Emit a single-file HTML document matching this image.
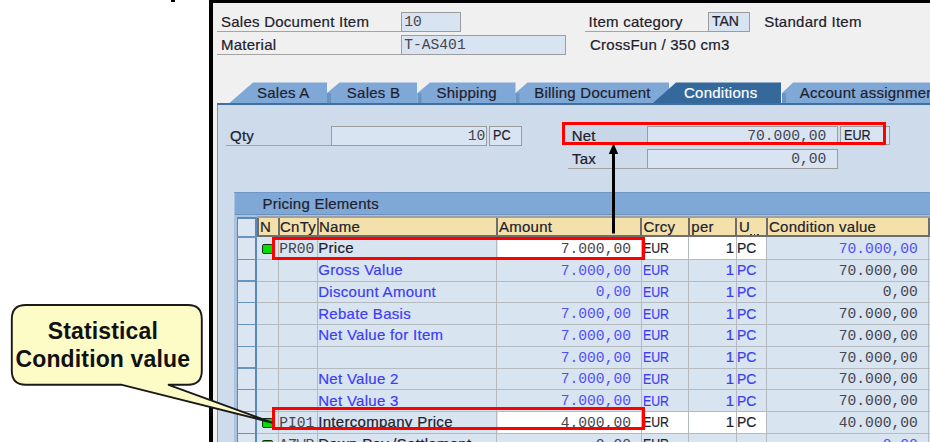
<!DOCTYPE html>
<html><head><meta charset="utf-8"><style>
html,body{margin:0;padding:0;}
body{width:930px;height:442px;overflow:hidden;position:relative;background:#fff;}
body>div{position:absolute;}
.s{font-family:"Liberation Sans",sans-serif;line-height:1;white-space:nowrap;-webkit-text-stroke:0.2px currentColor;}
.m{font-family:"Liberation Mono",monospace;line-height:1;white-space:nowrap;}
.b{font-family:"Liberation Sans",sans-serif;font-weight:bold;font-size:23px;line-height:27.5px;text-align:center;color:#111;}
</style></head><body>
<div style="left:213px;top:3px;width:717.00px;height:439.00px;background:#f0f0f0;"></div>
<div style="left:209px;top:0px;width:4.00px;height:442.00px;background:#000;"></div>
<div style="left:209px;top:0px;width:721.00px;height:3.00px;background:#000;"></div>
<div style="left:171px;top:0px;width:4.00px;height:2.00px;background:#000;"></div>
<div class="s" style="left:221px;top:14.10px;font-size:15px;letter-spacing:0.25px;color:#20202c;">Sales Document Item</div>
<div style="left:217px;top:31px;width:184.00px;height:1.00px;background:#a4a4a4;"></div>
<div style="left:401px;top:12px;width:60.00px;height:20.00px;background:#d9e4f2;box-sizing:border-box;border:1px solid #9c9c9c;"></div>
<div class="m" style="left:404.20px;top:14.67px;font-size:14.65px;color:#45454f;">10</div>
<div class="s" style="left:221px;top:36.80px;font-size:15px;letter-spacing:0.25px;color:#20202c;">Material</div>
<div style="left:217px;top:54px;width:184.00px;height:1.00px;background:#a4a4a4;"></div>
<div style="left:401px;top:35px;width:165.00px;height:20.00px;background:#d9e4f2;box-sizing:border-box;border:1px solid #9c9c9c;"></div>
<div class="m" style="left:404.20px;top:37.67px;font-size:14.65px;color:#45454f;">T-AS401</div>
<div class="s" style="left:588.6px;top:13.80px;font-size:15px;letter-spacing:0.25px;color:#20202c;">Item category</div>
<div style="left:585px;top:31px;width:123.00px;height:1.00px;background:#a4a4a4;"></div>
<div style="left:708px;top:12px;width:42.00px;height:20.00px;background:#d9e4f2;box-sizing:border-box;border:1px solid #9c9c9c;"></div>
<div class="s" style="left:712px;top:13.85px;font-size:14px;letter-spacing:0px;color:#20202c;">TAN</div>
<div class="s" style="left:764.2px;top:14.00px;font-size:15px;letter-spacing:0.25px;color:#20202c;">Standard Item</div>
<div class="s" style="left:590px;top:36.80px;font-size:15px;letter-spacing:0.25px;color:#20202c;">CrossFun / 350 cm3</div>
<svg style="position:absolute;left:0;top:0" width="930" height="442"><polygon points="229.4,103 253,82.5 327,82.5 327,103.5" fill="#80a8d7"/><polygon points="327,93 339.5,82.5 417,82.5 417,103.5 327,103.5" fill="#80a8d7"/><rect x="327" y="93" width="4" height="10.5" fill="#6b93c1"/><polygon points="417.5,93 430,82.5 515.5,82.5 515.5,103.5 417.5,103.5" fill="#80a8d7"/><rect x="417.5" y="93" width="4" height="10.5" fill="#6b93c1"/><polygon points="515.5,93 527.5,82.5 669,82.5 669,103.5 515.5,103.5" fill="#80a8d7"/><rect x="515.5" y="93" width="4" height="10.5" fill="#6b93c1"/><polygon points="652.9,103 676,82.5 781,82.5 781,103.5" fill="#35699c"/><polygon points="782,93 793,82.5 930,82.5 930,103.5 782,103.5" fill="#80a8d7"/><rect x="782" y="93" width="4" height="10.5" fill="#6b93c1"/></svg>
<div class="s" style="left:257px;top:84.90px;font-size:15px;letter-spacing:0.25px;color:#20202c;">Sales A</div>
<div class="s" style="left:346.8px;top:84.90px;font-size:15px;letter-spacing:0.25px;color:#20202c;">Sales B</div>
<div class="s" style="left:436.5px;top:84.90px;font-size:15px;letter-spacing:0.25px;color:#20202c;">Shipping</div>
<div class="s" style="left:534.2px;top:84.90px;font-size:15px;letter-spacing:0.25px;color:#20202c;">Billing Document</div>
<div class="s" style="left:684px;top:84.90px;font-size:15px;letter-spacing:0.25px;color:#ffffff;">Conditions</div>
<div class="s" style="left:799.7px;top:84.90px;font-size:15px;letter-spacing:0.25px;color:#20202c;">Account assignment</div>
<div style="left:216.5px;top:105px;width:713.50px;height:337.00px;background:#cddbeb;"></div>
<div style="left:216.5px;top:105px;width:1.00px;height:337.00px;background:#7097c2;"></div>
<div style="left:216.5px;top:102.5px;width:713.50px;height:2.50px;background:#3f6f9f;"></div>
<div class="s" style="left:230px;top:127.90px;font-size:15px;letter-spacing:0.25px;color:#20202c;">Qty</div>
<div style="left:225.5px;top:145px;width:105.50px;height:1.00px;background:#a4a4a4;"></div>
<div style="left:331px;top:125.7px;width:156.00px;height:20.10px;background:#d9e4f2;box-sizing:border-box;border:1px solid #9c9c9c;"></div>
<div class="m" style="right:444.70px;top:128.57px;font-size:14.65px;color:#45454f;">10</div>
<div style="left:489px;top:125.7px;width:33.00px;height:20.10px;background:#d9e4f2;box-sizing:border-box;border:1px solid #9c9c9c;"></div>
<div class="s" style="left:493.4px;top:127.85px;font-size:14px;letter-spacing:0px;color:#20202c;transform:scaleX(0.9);transform-origin:0 0;">PC</div>
<div style="left:566px;top:125.8px;width:81.00px;height:19.20px;background:#c8d7e8;"></div>
<div class="s" style="left:571.7px;top:127.70px;font-size:15px;letter-spacing:0.25px;color:#20202c;">Net</div>
<div style="left:647px;top:125.8px;width:191.00px;height:19.20px;background:#d9e4f2;box-sizing:border-box;border:1px solid #9c9c9c;"></div>
<div class="m" style="right:103.70px;top:128.57px;font-size:14.65px;color:#45454f;">70.000,00</div>
<div style="left:840px;top:125.8px;width:50.00px;height:19.20px;background:#d9e4f2;box-sizing:border-box;border:1px solid #9c9c9c;"></div>
<div class="s" style="left:844px;top:127.85px;font-size:14px;letter-spacing:0px;color:#20202c;transform:scaleX(0.9);transform-origin:0 0;">EUR</div>
<div class="s" style="left:572px;top:150.80px;font-size:15px;letter-spacing:0.25px;color:#20202c;">Tax</div>
<div style="left:567.6px;top:168px;width:79.40px;height:1.00px;background:#a4a4a4;"></div>
<div style="left:647px;top:148.5px;width:191.00px;height:20.30px;background:#d9e4f2;box-sizing:border-box;border:1px solid #9c9c9c;"></div>
<div class="m" style="right:103.70px;top:151.57px;font-size:14.65px;color:#45454f;">0,00</div>
<div style="left:234px;top:192px;width:696.00px;height:250.00px;background:#a9c2de;"></div>
<div style="left:234px;top:192px;width:696.00px;height:1.00px;background:#6f96c4;"></div>
<div style="left:235px;top:193px;width:695.00px;height:20.60px;background:#80a8d6;"></div>
<div style="left:235px;top:213.6px;width:695.00px;height:1.90px;background:#6890c0;"></div>
<div style="left:235px;top:215.5px;width:695.00px;height:2.00px;background:#a9c2de;"></div>
<div style="left:257px;top:215.5px;width:673.00px;height:2.00px;background:#a0a0a0;"></div>
<div class="s" style="left:262.4px;top:196.10px;font-size:15px;letter-spacing:0.25px;color:#20202c;">Pricing Elements</div>
<div style="left:257px;top:217.5px;width:673.00px;height:19.00px;background:#f4e0aa;"></div>
<div style="left:257px;top:234.5px;width:673.00px;height:2.00px;background:#6e6e6e;"></div>
<div style="left:237px;top:217px;width:20.00px;height:42.30px;background:#dce6f2;"></div>
<div style="left:237px;top:217px;width:20.00px;height:1.50px;background:#5b88b8;"></div>
<div style="left:257px;top:217.5px;width:2.00px;height:19.00px;background:#6e6e6e;"></div>
<div style="left:277.5px;top:217.5px;width:2.00px;height:19.00px;background:#6e6e6e;"></div>
<div style="left:316.5px;top:217.5px;width:2.00px;height:19.00px;background:#6e6e6e;"></div>
<div style="left:495.5px;top:217.5px;width:2.00px;height:19.00px;background:#6e6e6e;"></div>
<div style="left:640px;top:217.5px;width:2.00px;height:19.00px;background:#6e6e6e;"></div>
<div style="left:687.5px;top:217.5px;width:2.00px;height:19.00px;background:#6e6e6e;"></div>
<div style="left:735px;top:217.5px;width:2.00px;height:19.00px;background:#6e6e6e;"></div>
<div style="left:765.5px;top:217.5px;width:2.00px;height:19.00px;background:#6e6e6e;"></div>
<div style="left:927.5px;top:217.5px;width:2.00px;height:19.00px;background:#6e6e6e;"></div>
<div class="s" style="left:260px;top:219.30px;font-size:15px;letter-spacing:0.25px;color:#20202c;">N</div>
<div class="s" style="left:280px;top:219.30px;font-size:15px;letter-spacing:0.25px;color:#20202c;">CnTy</div>
<div class="s" style="left:319px;top:219.30px;font-size:15px;letter-spacing:0.25px;color:#20202c;">Name</div>
<div class="s" style="left:499px;top:219.30px;font-size:15px;letter-spacing:0.25px;color:#20202c;">Amount</div>
<div class="s" style="left:643.5px;top:219.30px;font-size:15px;letter-spacing:0.25px;color:#20202c;">Crcy</div>
<div class="s" style="left:691.3px;top:219.30px;font-size:15px;letter-spacing:0.25px;color:#20202c;">per</div>
<div class="s" style="left:739px;top:219.30px;font-size:15px;letter-spacing:0.25px;color:#20202c;">U</div>
<div style="left:750.2px;top:233.8px;width:1.60px;height:1.60px;background:#303038;"></div>
<div style="left:753.6px;top:233.8px;width:1.60px;height:1.60px;background:#303038;"></div>
<div style="left:757.0px;top:233.8px;width:1.60px;height:1.60px;background:#303038;"></div>
<div class="s" style="left:769px;top:219.30px;font-size:15px;letter-spacing:0.25px;color:#20202c;">Condition value</div>
<div style="left:257px;top:236.5px;width:673.00px;height:22.80px;background:#d9e4f1;"></div>
<div style="left:497.5px;top:236.5px;width:268.00px;height:22.80px;background:#ffffff;"></div>
<div style="left:257px;top:259.3px;width:673.00px;height:21.75px;background:#d9e4f1;"></div>
<div style="left:238px;top:259.3px;width:17.00px;height:21.75px;background:#dce6f2;"></div>
<div style="left:257px;top:281.05px;width:673.00px;height:21.75px;background:#d9e4f1;"></div>
<div style="left:238px;top:281.05px;width:17.00px;height:21.75px;background:#dce6f2;"></div>
<div style="left:257px;top:302.8px;width:673.00px;height:21.75px;background:#d9e4f1;"></div>
<div style="left:238px;top:302.8px;width:17.00px;height:21.75px;background:#dce6f2;"></div>
<div style="left:257px;top:324.55px;width:673.00px;height:21.75px;background:#d9e4f1;"></div>
<div style="left:238px;top:324.55px;width:17.00px;height:21.75px;background:#dce6f2;"></div>
<div style="left:257px;top:346.3px;width:673.00px;height:21.75px;background:#d9e4f1;"></div>
<div style="left:238px;top:346.3px;width:17.00px;height:21.75px;background:#dce6f2;"></div>
<div style="left:257px;top:368.05px;width:673.00px;height:21.75px;background:#d9e4f1;"></div>
<div style="left:238px;top:368.05px;width:17.00px;height:21.75px;background:#dce6f2;"></div>
<div style="left:257px;top:389.8px;width:673.00px;height:21.75px;background:#d9e4f1;"></div>
<div style="left:238px;top:389.8px;width:17.00px;height:21.75px;background:#dce6f2;"></div>
<div style="left:257px;top:411.55px;width:673.00px;height:21.75px;background:#d9e4f1;"></div>
<div style="left:497.5px;top:411.55px;width:268.00px;height:21.75px;background:#ffffff;"></div>
<div style="left:238px;top:411.55px;width:17.00px;height:21.75px;background:#dce6f2;"></div>
<div style="left:257px;top:433.3px;width:673.00px;height:21.75px;background:#d9e4f1;"></div>
<div style="left:238px;top:433.3px;width:17.00px;height:21.75px;background:#dce6f2;"></div>
<div style="left:257px;top:258.8px;width:673.00px;height:1.00px;background:#b5b9c0;"></div>
<div style="left:237px;top:258.7px;width:20.00px;height:1.20px;background:#6a94c0;"></div>
<div style="left:257px;top:280.55px;width:673.00px;height:1.00px;background:#b5b9c0;"></div>
<div style="left:237px;top:280.45px;width:20.00px;height:1.20px;background:#6a94c0;"></div>
<div style="left:257px;top:302.3px;width:673.00px;height:1.00px;background:#b5b9c0;"></div>
<div style="left:237px;top:302.2px;width:20.00px;height:1.20px;background:#6a94c0;"></div>
<div style="left:257px;top:324.05px;width:673.00px;height:1.00px;background:#b5b9c0;"></div>
<div style="left:237px;top:323.95px;width:20.00px;height:1.20px;background:#6a94c0;"></div>
<div style="left:257px;top:345.8px;width:673.00px;height:1.00px;background:#b5b9c0;"></div>
<div style="left:237px;top:345.7px;width:20.00px;height:1.20px;background:#6a94c0;"></div>
<div style="left:257px;top:367.55px;width:673.00px;height:1.00px;background:#b5b9c0;"></div>
<div style="left:237px;top:367.45px;width:20.00px;height:1.20px;background:#6a94c0;"></div>
<div style="left:257px;top:389.3px;width:673.00px;height:1.00px;background:#b5b9c0;"></div>
<div style="left:237px;top:389.2px;width:20.00px;height:1.20px;background:#6a94c0;"></div>
<div style="left:257px;top:411.05px;width:673.00px;height:1.00px;background:#b5b9c0;"></div>
<div style="left:237px;top:410.95px;width:20.00px;height:1.20px;background:#6a94c0;"></div>
<div style="left:257px;top:432.8px;width:673.00px;height:1.00px;background:#b5b9c0;"></div>
<div style="left:237px;top:432.7px;width:20.00px;height:1.20px;background:#6a94c0;"></div>
<div style="left:257px;top:454.55px;width:673.00px;height:1.00px;background:#b5b9c0;"></div>
<div style="left:237px;top:454.45px;width:20.00px;height:1.20px;background:#6a94c0;"></div>
<div style="left:278.0px;top:236.5px;width:1.00px;height:205.50px;background:#b5b9c0;"></div>
<div style="left:317.0px;top:236.5px;width:1.00px;height:205.50px;background:#b5b9c0;"></div>
<div style="left:496.0px;top:236.5px;width:1.00px;height:205.50px;background:#b5b9c0;"></div>
<div style="left:640.5px;top:236.5px;width:1.00px;height:205.50px;background:#b5b9c0;"></div>
<div style="left:688.0px;top:236.5px;width:1.00px;height:205.50px;background:#b5b9c0;"></div>
<div style="left:735.5px;top:236.5px;width:1.00px;height:205.50px;background:#b5b9c0;"></div>
<div style="left:766.0px;top:236.5px;width:1.00px;height:205.50px;background:#b5b9c0;"></div>
<div style="left:928.0px;top:236.5px;width:1.00px;height:205.50px;background:#b5b9c0;"></div>
<div style="left:255px;top:217px;width:2.20px;height:225.00px;background:#5b88b8;"></div>
<div style="left:237px;top:217px;width:1.40px;height:225.00px;background:#5b88b8;"></div>
<div style="left:237px;top:236.4px;width:20.00px;height:1.20px;background:#6a94c0;"></div>
<div style="left:262.4px;top:244.30px;width:10.2px;height:9.6px;background:#00e000;border:1px solid #103010;border-radius:1.8px;box-sizing:border-box"></div>
<div class="m" style="left:279.20px;top:241.77px;font-size:14.65px;color:#45454f;">PR00</div>
<div class="s" style="left:318.2px;top:240.30px;font-size:15px;letter-spacing:0.3px;color:#20202c;">Price</div>
<div class="m" style="right:299.00px;top:241.77px;font-size:14.65px;color:#45454f;">7.000,00</div>
<div class="s" style="left:643px;top:240.30px;font-size:15px;letter-spacing:0px;color:#20202c;transform:scaleX(0.82);transform-origin:0 0;">EUR</div>
<div class="s" style="right:195.70px;top:240.30px;font-size:15px;letter-spacing:0.25px;color:#20202c;">1</div>
<div class="s" style="left:737.2px;top:240.30px;font-size:15px;letter-spacing:0px;color:#20202c;transform:scaleX(0.93);transform-origin:0 0;">PC</div>
<div class="m" style="right:12.20px;top:241.77px;font-size:14.65px;color:#5050fa;">70.000,00</div>
<div class="s" style="left:318.2px;top:262.05px;font-size:15px;letter-spacing:0.3px;color:#3c3cf4;">Gross Value</div>
<div class="m" style="right:299.00px;top:263.52px;font-size:14.65px;color:#5050fa;">7.000,00</div>
<div class="s" style="left:643px;top:262.05px;font-size:15px;letter-spacing:0px;color:#3c3cf4;transform:scaleX(0.82);transform-origin:0 0;">EUR</div>
<div class="s" style="right:195.70px;top:262.05px;font-size:15px;letter-spacing:0.25px;color:#3c3cf4;">1</div>
<div class="s" style="left:737.2px;top:262.05px;font-size:15px;letter-spacing:0px;color:#3c3cf4;transform:scaleX(0.93);transform-origin:0 0;">PC</div>
<div class="m" style="right:12.20px;top:263.52px;font-size:14.65px;color:#45454f;">70.000,00</div>
<div class="s" style="left:318.2px;top:283.80px;font-size:15px;letter-spacing:0.3px;color:#3c3cf4;">Discount Amount</div>
<div class="m" style="right:299.00px;top:285.27px;font-size:14.65px;color:#5050fa;">0,00</div>
<div class="s" style="left:643px;top:283.80px;font-size:15px;letter-spacing:0px;color:#3c3cf4;transform:scaleX(0.82);transform-origin:0 0;">EUR</div>
<div class="s" style="right:195.70px;top:283.80px;font-size:15px;letter-spacing:0.25px;color:#3c3cf4;">1</div>
<div class="s" style="left:737.2px;top:283.80px;font-size:15px;letter-spacing:0px;color:#3c3cf4;transform:scaleX(0.93);transform-origin:0 0;">PC</div>
<div class="m" style="right:12.20px;top:285.27px;font-size:14.65px;color:#45454f;">0,00</div>
<div class="s" style="left:318.2px;top:305.55px;font-size:15px;letter-spacing:0.3px;color:#3c3cf4;">Rebate Basis</div>
<div class="m" style="right:299.00px;top:307.02px;font-size:14.65px;color:#5050fa;">7.000,00</div>
<div class="s" style="left:643px;top:305.55px;font-size:15px;letter-spacing:0px;color:#3c3cf4;transform:scaleX(0.82);transform-origin:0 0;">EUR</div>
<div class="s" style="right:195.70px;top:305.55px;font-size:15px;letter-spacing:0.25px;color:#3c3cf4;">1</div>
<div class="s" style="left:737.2px;top:305.55px;font-size:15px;letter-spacing:0px;color:#3c3cf4;transform:scaleX(0.93);transform-origin:0 0;">PC</div>
<div class="m" style="right:12.20px;top:307.02px;font-size:14.65px;color:#45454f;">70.000,00</div>
<div class="s" style="left:318.2px;top:327.30px;font-size:15px;letter-spacing:0.3px;color:#3c3cf4;">Net Value for Item</div>
<div class="m" style="right:299.00px;top:328.77px;font-size:14.65px;color:#5050fa;">7.000,00</div>
<div class="s" style="left:643px;top:327.30px;font-size:15px;letter-spacing:0px;color:#3c3cf4;transform:scaleX(0.82);transform-origin:0 0;">EUR</div>
<div class="s" style="right:195.70px;top:327.30px;font-size:15px;letter-spacing:0.25px;color:#3c3cf4;">1</div>
<div class="s" style="left:737.2px;top:327.30px;font-size:15px;letter-spacing:0px;color:#3c3cf4;transform:scaleX(0.93);transform-origin:0 0;">PC</div>
<div class="m" style="right:12.20px;top:328.77px;font-size:14.65px;color:#45454f;">70.000,00</div>
<div class="m" style="right:299.00px;top:350.52px;font-size:14.65px;color:#5050fa;">7.000,00</div>
<div class="s" style="left:643px;top:349.05px;font-size:15px;letter-spacing:0px;color:#3c3cf4;transform:scaleX(0.82);transform-origin:0 0;">EUR</div>
<div class="s" style="right:195.70px;top:349.05px;font-size:15px;letter-spacing:0.25px;color:#3c3cf4;">1</div>
<div class="s" style="left:737.2px;top:349.05px;font-size:15px;letter-spacing:0px;color:#3c3cf4;transform:scaleX(0.93);transform-origin:0 0;">PC</div>
<div class="m" style="right:12.20px;top:350.52px;font-size:14.65px;color:#45454f;">70.000,00</div>
<div class="s" style="left:318.2px;top:370.80px;font-size:15px;letter-spacing:0.3px;color:#3c3cf4;">Net Value 2</div>
<div class="m" style="right:299.00px;top:372.27px;font-size:14.65px;color:#5050fa;">7.000,00</div>
<div class="s" style="left:643px;top:370.80px;font-size:15px;letter-spacing:0px;color:#3c3cf4;transform:scaleX(0.82);transform-origin:0 0;">EUR</div>
<div class="s" style="right:195.70px;top:370.80px;font-size:15px;letter-spacing:0.25px;color:#3c3cf4;">1</div>
<div class="s" style="left:737.2px;top:370.80px;font-size:15px;letter-spacing:0px;color:#3c3cf4;transform:scaleX(0.93);transform-origin:0 0;">PC</div>
<div class="m" style="right:12.20px;top:372.27px;font-size:14.65px;color:#45454f;">70.000,00</div>
<div class="s" style="left:318.2px;top:392.55px;font-size:15px;letter-spacing:0.3px;color:#3c3cf4;">Net Value 3</div>
<div class="m" style="right:299.00px;top:394.02px;font-size:14.65px;color:#5050fa;">7.000,00</div>
<div class="s" style="left:643px;top:392.55px;font-size:15px;letter-spacing:0px;color:#3c3cf4;transform:scaleX(0.82);transform-origin:0 0;">EUR</div>
<div class="s" style="right:195.70px;top:392.55px;font-size:15px;letter-spacing:0.25px;color:#3c3cf4;">1</div>
<div class="s" style="left:737.2px;top:392.55px;font-size:15px;letter-spacing:0px;color:#3c3cf4;transform:scaleX(0.93);transform-origin:0 0;">PC</div>
<div class="m" style="right:12.20px;top:394.02px;font-size:14.65px;color:#45454f;">70.000,00</div>
<div style="left:262.4px;top:418.30px;width:10.2px;height:9.6px;background:#00e000;border:1px solid #103010;border-radius:1.8px;box-sizing:border-box"></div>
<div class="m" style="left:279.20px;top:415.77px;font-size:14.65px;color:#45454f;">PI01</div>
<div class="s" style="left:318.2px;top:414.30px;font-size:15px;letter-spacing:0.3px;color:#20202c;">Intercompany Price</div>
<div class="m" style="right:299.00px;top:415.77px;font-size:14.65px;color:#45454f;">4.000,00</div>
<div class="s" style="left:643px;top:414.30px;font-size:15px;letter-spacing:0px;color:#20202c;transform:scaleX(0.82);transform-origin:0 0;">EUR</div>
<div class="s" style="right:195.70px;top:414.30px;font-size:15px;letter-spacing:0.25px;color:#20202c;">1</div>
<div class="s" style="left:737.2px;top:414.30px;font-size:15px;letter-spacing:0px;color:#20202c;transform:scaleX(0.93);transform-origin:0 0;">PC</div>
<div class="m" style="right:12.20px;top:415.77px;font-size:14.65px;color:#45454f;">40.000,00</div>
<div style="left:262.4px;top:440.05px;width:10.2px;height:9.6px;background:#00e000;border:1px solid #103010;border-radius:1.8px;box-sizing:border-box"></div>
<div class="m" style="left:279.20px;top:437.52px;font-size:14.65px;color:#45454f;">AZWR</div>
<div class="s" style="left:318.2px;top:436.05px;font-size:15px;letter-spacing:0.3px;color:#20202c;">Down Pay./Settlement</div>
<div class="m" style="right:299.00px;top:437.52px;font-size:14.65px;color:#45454f;">0,00</div>
<div class="s" style="left:643px;top:436.05px;font-size:15px;letter-spacing:0px;color:#20202c;transform:scaleX(0.82);transform-origin:0 0;">EUR</div>
<div class="m" style="right:12.20px;top:437.52px;font-size:14.65px;color:#5050fa;">0,00</div>
<div style="left:562px;top:122.3px;width:323.5px;height:22.8px;border:3.5px solid #ff0000;box-sizing:border-box"></div>
<div style="left:272px;top:236.5px;width:373px;height:23.7px;border:3.5px solid #ff0000;box-sizing:border-box"></div>
<div style="left:272px;top:407.2px;width:373px;height:23px;border:3.5px solid #ff0000;box-sizing:border-box"></div>
<svg style="position:absolute;left:0;top:0" width="930" height="442"><rect x="612" y="152" width="3" height="81.5" fill="#000"/><polygon points="613.5,143.3 608.8,154 618.2,154" fill="#000"/></svg>
<svg style="position:absolute;left:0;top:0" width="930" height="442"><path d="M 25.8 305 H 188 Q 201.8 305 201.8 319 V 370.8 Q 201.8 384.8 188 384.8 H 168.6 L 271.5 422.5 L 122 384.8 H 25.8 Q 11.8 384.8 11.8 370.8 V 319 Q 11.8 305 25.8 305 Z" fill="#fdfbc6" stroke="#1a1a1a" stroke-width="1.9" stroke-linejoin="round"/></svg>
<div class="b" style="left:6.8px;width:192px;top:318px;letter-spacing:0.15px">Statistical<br>Condition value</div>
</body></html>
